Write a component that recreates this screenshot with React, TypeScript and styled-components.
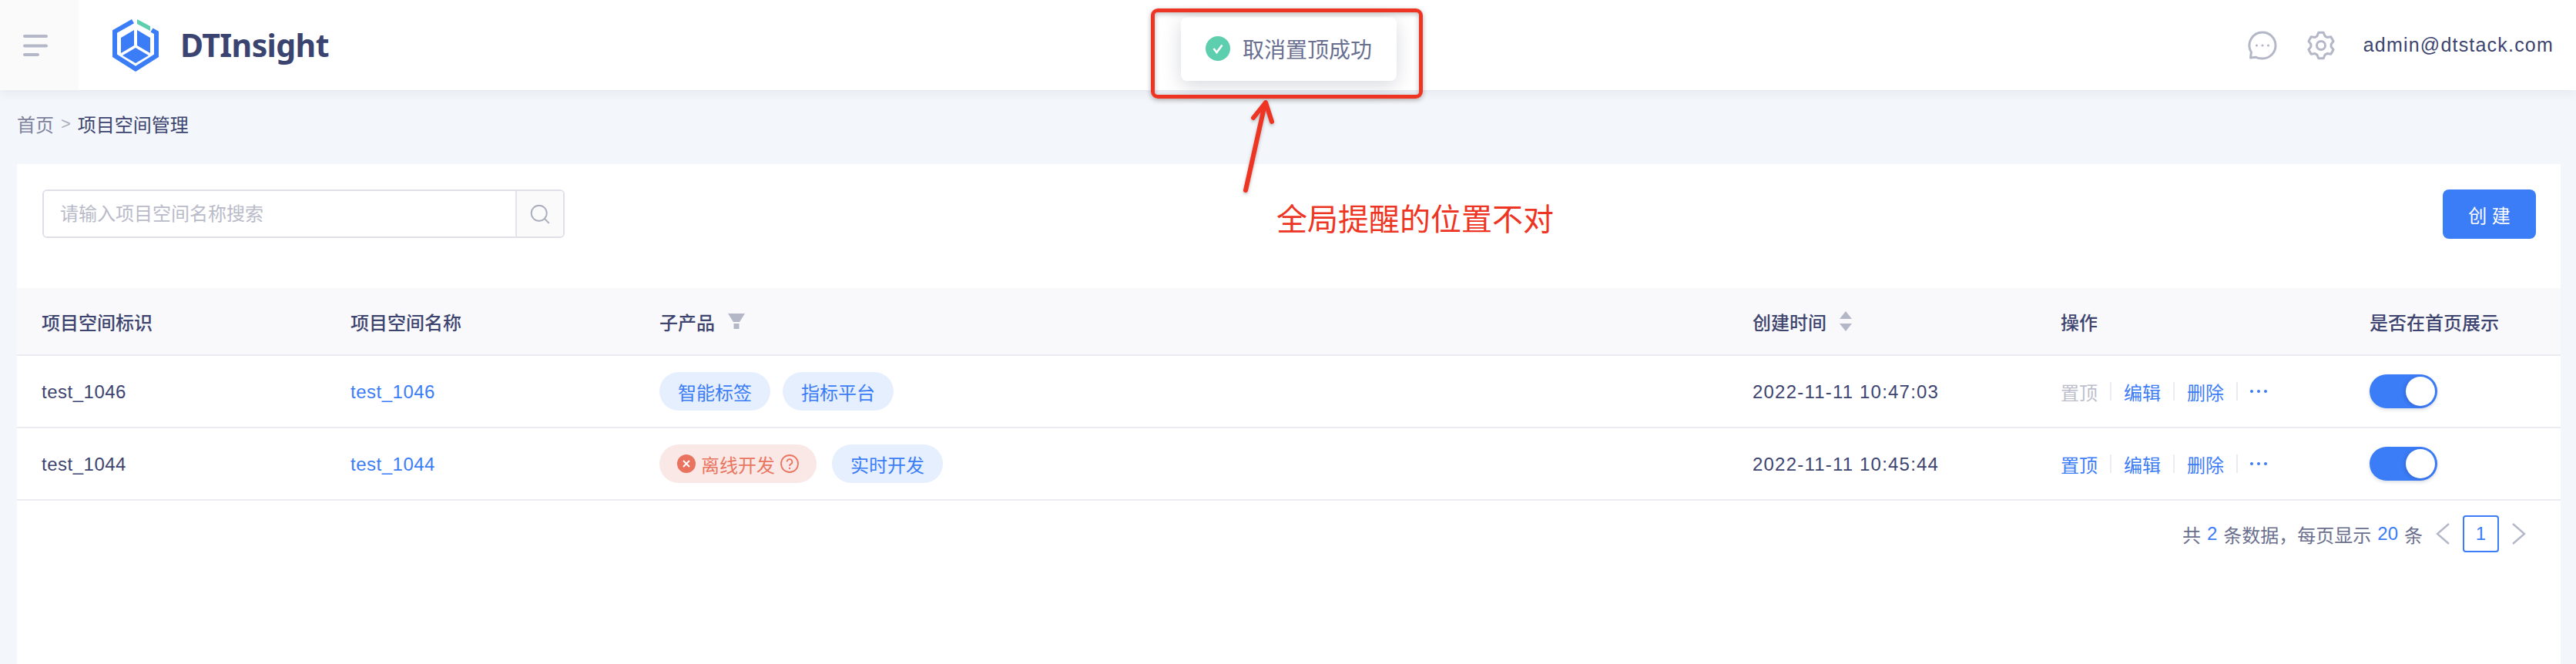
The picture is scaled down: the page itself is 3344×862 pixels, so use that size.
import React from "react";
import styled, { createGlobalStyle } from "styled-components";
import { Search } from "lucide-react";

const FONT = '"Liberation Sans", "Noto Sans CJK SC", sans-serif';
const INK = "#3d446f";
const BLUE = "#3b7cf7";
const GREY = "#b4b7c7";
const RED = "#ee3524";

const Global = createGlobalStyle`
  html, body { margin: 0; padding: 0; background: #f3f6fa; }
  body { font-family: ${FONT}; font-size: 24px; color: ${INK}; }
  * { box-sizing: border-box; }
`;

const Page = styled.div`
  position: relative;
  width: 3344px;
  height: 862px;
  display: flex;
  flex-direction: column;
  overflow: hidden;
`;

const Header = styled.header`
  position: relative;
  z-index: 1;
  height: 117px;
  flex: none;
  display: flex;
  align-items: center;
  background: #fff;
  box-shadow: 0 2px 14px rgba(60, 70, 110, 0.09);
`;

const MenuCell = styled.div`
  width: 102px;
  height: 100%;
  flex: none;
  background: #fafafb;
  display: flex;
  align-items: center;
  padding-left: 30px;
`;

const Brand = styled.div`
  display: flex;
  align-items: center;
  gap: 28px;
  margin-left: 44px;
`;

const BrandName = styled.span`
  font-family: "Noto Sans", sans-serif;
  font-weight: 700;
  font-size: 41px;
  line-height: 1;
  letter-spacing: -0.6px;
  color: #3b4470;
`;

const HeaderRight = styled.div`
  margin-left: auto;
  display: flex;
  align-items: center;
  padding-right: 29px;
`;

const IconSlot = styled.div<{ $gap: number }>`
  display: flex;
  margin-right: ${(p) => p.$gap}px;
`;

const Email = styled.span`
  font-size: 25px;
  letter-spacing: 1.2px;
  color: ${INK};
`;

const Main = styled.main`
  flex: 1;
  display: flex;
  flex-direction: column;
  padding: 0 20px 0 22px;
`;

const Breadcrumb = styled.nav`
  height: 96px;
  flex: none;
  display: flex;
  align-items: center;
  padding: 0 0 9px 0;
`;

const CrumbLink = styled.span`
  color: #7d829d;
`;

const CrumbSep = styled.span`
  color: #a9adbd;
  margin: 0 9px;
  font-size: 22px;
`;

const Card = styled.section`
  flex: 1;
  background: #fff;
  display: flex;
  flex-direction: column;
`;

const Toolbar = styled.div`
  height: 161px;
  flex: none;
  display: flex;
  justify-content: space-between;
  align-items: flex-start;
  padding: 33px 32px 0 33px;
`;

const SearchBox = styled.div`
  width: 678px;
  height: 63px;
  display: flex;
  border: 2px solid #dfe0e7;
  border-radius: 6px;
  overflow: hidden;
`;

const SearchInput = styled.input`
  flex: 1;
  min-width: 0;
  border: 0;
  outline: 0;
  padding: 0 0 0 21px;
  font: 24px ${FONT};
  color: ${INK};
  background: #fff;
  &::placeholder { color: #b9bbc9; opacity: 1; }
`;

const SearchBtn = styled.div`
  width: 62px;
  flex: none;
  display: flex;
  align-items: center;
  justify-content: center;
  background: #fafafb;
  border-left: 2px solid #e4e5eb;
  color: #a9adbd;
`;

const CreateBtn = styled.button`
  width: 121px;
  height: 64px;
  border: 0;
  border-radius: 8px;
  background: ${BLUE};
  color: #fff;
  font: 24px ${FONT};
`;

const Row = styled.div<{ $head?: boolean }>`
  display: grid;
  grid-template-columns: 401px 401px 1419px 400px 401px 280px;
  align-items: center;
  height: ${(p) => (p.$head ? 88 : 94)}px;
  background: ${(p) => (p.$head ? "#f9f9fb" : "#fff")};
  border-bottom: 2px solid #ebecf2;
`;

const Cell = styled.div<{ $head?: boolean }>`
  padding-left: 32px;
  display: flex;
  align-items: center;
  font-weight: ${(p) => (p.$head ? 500 : 400)};
  letter-spacing: ${(p) => (p.$head ? 0 : 0.5)}px;
`;

const BodyText = styled.span`
  padding-top: 2px;
`;

const NameLink = styled(BodyText)`
  color: ${BLUE};
`;

const Time = styled(BodyText)`
  letter-spacing: 1.2px;
`;

const HeadIcon = styled.span<{ $ml: number }>`
  display: inline-flex;
  margin-left: ${(p) => p.$ml}px;
`;

const Chips = styled.div`
  display: flex;
  gap: 16px;
`;

const Chip = styled.span<{ $bad?: boolean }>`
  height: 50px;
  padding: 0 ${(p) => (p.$bad ? 23 : 24)}px;
  margin-right: ${(p) => (p.$bad ? 4 : 0)}px;
  border-radius: 25px;
  display: inline-flex;
  align-items: center;
  gap: 7px;
  letter-spacing: 0;
  background: ${(p) => (p.$bad ? "#f9e8e6" : "#e6effe")};
  color: ${(p) => (p.$bad ? "#ea7560" : BLUE)};
`;

const Actions = styled.div`
  display: flex;
  align-items: center;
  letter-spacing: 0;
`;

const Action = styled.span<{ $off?: boolean }>`
  color: ${(p) => (p.$off ? "#bcbecb" : BLUE)};
`;

const ActionSep = styled.span`
  width: 2px;
  height: 24px;
  margin: 0 16px;
  background: #ebecf2;
`;

const Toggle = styled.div`
  width: 88px;
  height: 44px;
  border-radius: 22px;
  background: ${BLUE};
  display: flex;
  justify-content: flex-end;
  align-items: center;
  padding-right: 3px;
  box-shadow: 0 2px 4px rgba(60, 70, 110, 0.18);
`;

const Knob = styled.span`
  width: 38px;
  height: 38px;
  border-radius: 50%;
  background: #fff;
  box-shadow: -2px 1px 4px rgba(30, 60, 130, 0.25);
`;

const Pager = styled.div`
  display: flex;
  justify-content: flex-end;
  align-items: center;
  padding: 19px 43px 0 0;
  color: #6a6f8e;
`;

const Num = styled.span`
  color: ${BLUE};
  margin: 0 8px;
`;

const PageBox = styled.span`
  width: 47px;
  height: 48px;
  margin: 0 15px;
  border: 2px solid ${BLUE};
  border-radius: 4px;
  color: ${BLUE};
  display: flex;
  align-items: center;
  justify-content: center;
`;

const Toast = styled.div`
  position: absolute;
  left: 1533px;
  top: 22px;
  z-index: 3;
  width: 280px;
  height: 83px;
  background: #fff;
  border-radius: 8px;
  box-shadow: 0 6px 24px rgba(60, 66, 90, 0.2);
  display: flex;
  align-items: center;
  gap: 16px;
  padding: 0 0 1px 32px;
  font-size: 28px;
  color: #696f90;
`;

const Marker = styled.div`
  position: absolute;
  left: 1494px;
  top: 11px;
  z-index: 4;
  width: 353px;
  height: 117px;
  border: 5px solid ${RED};
  border-radius: 9px;
  box-shadow: 0 2px 6px rgba(40, 40, 40, 0.35), inset 0 2px 6px rgba(40, 40, 40, 0.3);
`;

const ArrowWrap = styled.div`
  position: absolute;
  left: 1600px;
  top: 123px;
  z-index: 4;
  display: flex;
  filter: drop-shadow(0 2px 2px rgba(40, 40, 40, 0.3));
`;

const Note = styled.div`
  position: absolute;
  left: 1657px;
  top: 261px;
  z-index: 4;
  font-size: 40px;
  line-height: 48px;
  color: ${RED};
`;

function Logo() {
  return (
    <svg width="60" height="68" viewBox="0 0 60 68">
      <path d="M26.5 2.6 L3 16 V47.3 L30 64.4 L57 47.3 V17.5 L51 14" fill="none" stroke={BLUE} strokeWidth="6" />
      <path d="M32 0 L49 9 V15 L32 6 Z" fill="#5dcfae" />
      <path d="M11 24 L28 14 V34 L11 44 Z" fill={BLUE} />
      <path d="M32 14 L49 24 V44 L32 34 Z" fill={BLUE} />
      <path d="M30 37 L47 47 L30 57 L13 47 Z" fill={BLUE} />
    </svg>
  );
}

function MenuIcon() {
  return (
    <svg width="32" height="28" viewBox="0 0 32 28" fill={GREY}>
      <rect x="0" y="0" width="32" height="4" rx="2" />
      <rect x="0" y="12.5" width="32" height="4" rx="2" />
      <rect x="0" y="24" width="21" height="4" rx="2" />
    </svg>
  );
}

function ChatIcon() {
  return (
    <svg width="40" height="40" viewBox="0 0 40 40" fill="none" stroke={GREY} strokeWidth="3">
      <path d="M20 3 A17 17 0 1 1 20 37 C16.5 37 13.5 36.4 11.5 35.2 L4.5 36 L5.4 28.7 A17 17 0 0 1 20 3 Z" strokeLinejoin="round" />
      <circle cx="12.5" cy="20" r="1.6" fill={GREY} stroke="none" />
      <circle cx="20" cy="20" r="1.6" fill={GREY} stroke="none" />
      <circle cx="27.5" cy="20" r="1.6" fill={GREY} stroke="none" />
    </svg>
  );
}

function gearPath() {
  const pts: string[] = [];
  for (let k = 0; k < 6; k++) {
    const a = -90 + 60 * k;
    const pairs: [number, number][] = [
      [13.2, a - 23],
      [17, a - 11],
      [17, a + 11],
      [13.2, a + 23],
    ];
    for (const [r, d] of pairs) {
      const t = (d * Math.PI) / 180;
      pts.push(`${(19 + r * Math.cos(t)).toFixed(2)} ${(19 + r * Math.sin(t)).toFixed(2)}`);
    }
  }
  return "M" + pts.join(" L") + " Z";
}

function GearIcon() {
  return (
    <svg width="38" height="38" viewBox="0 0 38 38" fill="none" stroke={GREY} strokeWidth="3" strokeLinejoin="round">
      <path d={gearPath()} />
      <circle cx="19" cy="19" r="5.5" />
    </svg>
  );
}

function FilterIcon() {
  return (
    <svg width="22" height="20" viewBox="0 0 22 20" fill={GREY}>
      <path d="M0 0 H22 L15 11 H7 Z" />
      <rect x="7.5" y="13" width="7" height="7" />
    </svg>
  );
}

function SortIcon() {
  return (
    <svg width="16" height="26" viewBox="0 0 16 26" fill={GREY}>
      <path d="M8 0 L16 10 H0 Z" />
      <path d="M0 16 H16 L8 26 Z" />
    </svg>
  );
}

function CheckBadge() {
  return (
    <svg width="32" height="32" viewBox="0 0 32 32">
      <circle cx="16" cy="16" r="16" fill="#5dcfae" />
      <path d="M10.5 16 L14.5 21 L21.5 11.5" fill="none" stroke="#fff" strokeWidth="2.6" />
    </svg>
  );
}

function ErrorBadge() {
  return (
    <svg width="24" height="24" viewBox="0 0 24 24">
      <circle cx="12" cy="12" r="12" fill="#e9735f" />
      <path d="M8 8 L16 16 M16 8 L8 16" stroke="#fff" strokeWidth="2" />
    </svg>
  );
}

function HelpBadge() {
  return (
    <svg width="24" height="24" viewBox="0 0 24 24" fill="none" stroke="#ea7560" strokeWidth="1.8">
      <circle cx="12" cy="12" r="11" />
      <path d="M8.6 9.6 A3.4 3.4 0 1 1 13.5 12.6 C12.4 13.2 12 13.8 12 15" />
      <circle cx="12" cy="18" r="1.2" fill="#ea7560" stroke="none" />
    </svg>
  );
}

function MoreDots() {
  return (
    <svg width="22" height="4" viewBox="0 0 22 4" fill={BLUE}>
      <circle cx="2" cy="2" r="2" />
      <circle cx="11" cy="2" r="2" />
      <circle cx="20" cy="2" r="2" />
    </svg>
  );
}

function Chevron({ left }: { left?: boolean }) {
  return (
    <svg width="22" height="30" viewBox="0 0 22 30" fill="none" stroke={GREY} strokeWidth="2.4">
      <path d={left ? "M19 2 L4 15 L19 28" : "M3 2 L18 15 L3 28"} />
    </svg>
  );
}

function Arrow() {
  return (
    <svg width="60" height="130" viewBox="0 0 60 130" fill="none" stroke={RED} strokeWidth="6" strokeLinecap="round" strokeLinejoin="round">
      <path d="M17 124 L42 12" />
      <path d="M27 30 L43 10 L51 35" />
    </svg>
  );
}

const rows = [
  { id: "test_1046", time: "2022-11-11 10:47:03", pinOff: true, bad: false, first: "智能标签", second: "指标平台" },
  { id: "test_1044", time: "2022-11-11 10:45:44", pinOff: false, bad: true, first: "离线开发", second: "实时开发" },
];

export default function App() {
  return (
    <Page>
      <Global />
      <Header>
        <MenuCell>
          <MenuIcon />
        </MenuCell>
        <Brand>
          <Logo />
          <BrandName>DTInsight</BrandName>
        </Brand>
        <HeaderRight>
          <IconSlot $gap={37}>
            <ChatIcon />
          </IconSlot>
          <IconSlot $gap={36}>
            <GearIcon />
          </IconSlot>
          <Email>admin@dtstack.com</Email>
        </HeaderRight>
      </Header>
      <Main>
        <Breadcrumb>
          <CrumbLink>首页</CrumbLink>
          <CrumbSep>&gt;</CrumbSep>
          <span>项目空间管理</span>
        </Breadcrumb>
        <Card>
          <Toolbar>
            <SearchBox>
              <SearchInput placeholder="请输入项目空间名称搜索" readOnly />
              <SearchBtn>
                <Search size={30} strokeWidth={1.5} />
              </SearchBtn>
            </SearchBox>
            <CreateBtn>创 建</CreateBtn>
          </Toolbar>
          <Row $head>
            <Cell $head>项目空间标识</Cell>
            <Cell $head>项目空间名称</Cell>
            <Cell $head>
              子产品
              <HeadIcon $ml={17}>
                <FilterIcon />
              </HeadIcon>
            </Cell>
            <Cell $head>
              创建时间
              <HeadIcon $ml={17}>
                <SortIcon />
              </HeadIcon>
            </Cell>
            <Cell $head>操作</Cell>
            <Cell $head>是否在首页展示</Cell>
          </Row>
          {rows.map((r) => (
            <Row key={r.id}>
              <Cell>
                <BodyText>{r.id}</BodyText>
              </Cell>
              <Cell>
                <NameLink>{r.id}</NameLink>
              </Cell>
              <Cell>
                <Chips>
                  <Chip $bad={r.bad}>
                    {r.bad && <ErrorBadge />}
                    {r.first}
                    {r.bad && <HelpBadge />}
                  </Chip>
                  <Chip>{r.second}</Chip>
                </Chips>
              </Cell>
              <Cell>
                <Time>{r.time}</Time>
              </Cell>
              <Cell>
                <Actions>
                  <Action $off={r.pinOff}>置顶</Action>
                  <ActionSep />
                  <Action>编辑</Action>
                  <ActionSep />
                  <Action>删除</Action>
                  <ActionSep />
                  <MoreDots />
                </Actions>
              </Cell>
              <Cell>
                <Toggle>
                  <Knob />
                </Toggle>
              </Cell>
            </Row>
          ))}
          <Pager>
            共<Num>2</Num>条数据，每页显示<Num>20</Num>条
            <HeadIcon $ml={15}>
              <Chevron left />
            </HeadIcon>
            <PageBox>1</PageBox>
            <Chevron />
          </Pager>
        </Card>
      </Main>
      <Toast>
        <CheckBadge />
        取消置顶成功
      </Toast>
      <Marker />
      <ArrowWrap>
        <Arrow />
      </ArrowWrap>
      <Note>全局提醒的位置不对</Note>
    </Page>
  );
}
